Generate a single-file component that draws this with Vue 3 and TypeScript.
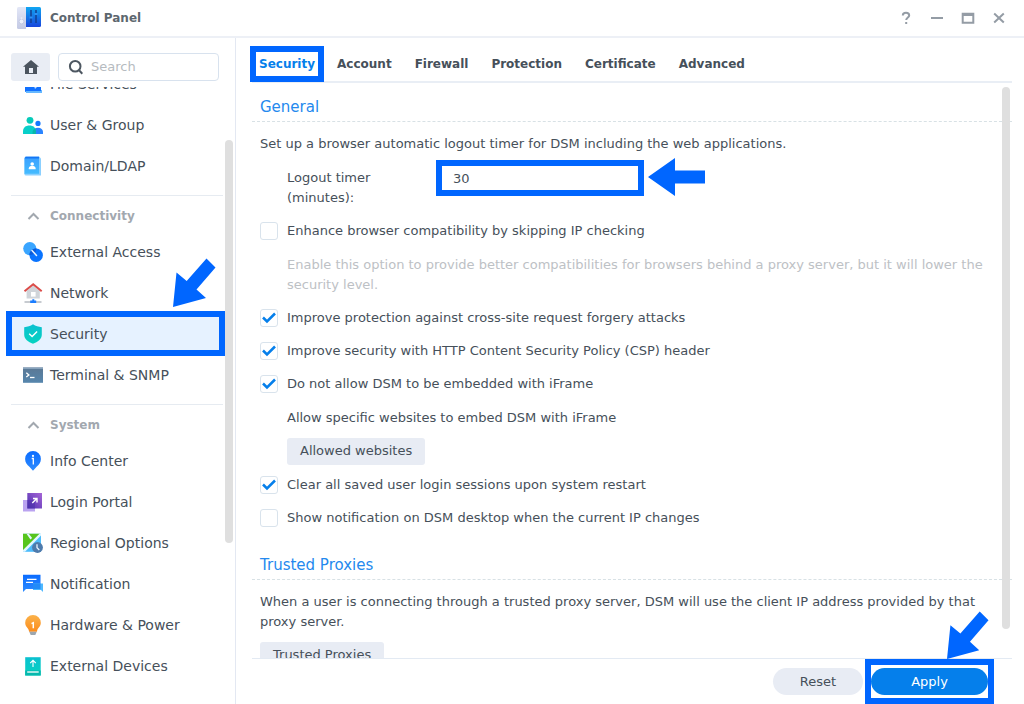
<script setup lang="ts">
import { ref } from 'vue'

interface NavItem { id: string; label: string }
interface NavGroup { title?: string; items: NavItem[] }

const groups: NavGroup[] = [
  {
    items: [
      { id: 'file', label: 'File Services' },
      { id: 'user', label: 'User & Group' },
      { id: 'domain', label: 'Domain/LDAP' },
    ],
  },
  {
    title: 'Connectivity',
    items: [
      { id: 'access', label: 'External Access' },
      { id: 'network', label: 'Network' },
      { id: 'security', label: 'Security' },
      { id: 'terminal', label: 'Terminal & SNMP' },
    ],
  },
  {
    title: 'System',
    items: [
      { id: 'info', label: 'Info Center' },
      { id: 'login', label: 'Login Portal' },
      { id: 'regional', label: 'Regional Options' },
      { id: 'notification', label: 'Notification' },
      { id: 'hardware', label: 'Hardware & Power' },
      { id: 'devices', label: 'External Devices' },
    ],
  },
]

const tabs = ['Security', 'Account', 'Firewall', 'Protection', 'Certificate', 'Advanced']
const activeNav = ref('security')
const activeTab = ref('Security')
const search = ref('')
const timer = ref('30')
const skipIp = ref(false)
const csrf = ref(true)
const csp = ref(true)
const iframe = ref(true)
const clearSessions = ref(true)
const notifyIp = ref(false)
</script>

<template>
  <svg class="sprite" aria-hidden="true">
    <defs>
      <linearGradient id="g-blue" x1="0" y1="0" x2="0" y2="1"><stop offset="0" stop-color="#0a6cff" /><stop offset="1" stop-color="#2f8cff" /></linearGradient>
      <linearGradient id="g-sky" x1="0" y1="0" x2="0" y2="1"><stop offset="0" stop-color="#3a9fff" /><stop offset="1" stop-color="#45bdff" /></linearGradient>
      <linearGradient id="g-teal" x1="0" y1="0" x2="0" y2="1"><stop offset="0" stop-color="#0bc0d0" /><stop offset="1" stop-color="#06d3c0" /></linearGradient>
      <linearGradient id="g-purple" x1="1" y1="0" x2="0" y2="1"><stop offset="0" stop-color="#a765d6" /><stop offset="1" stop-color="#4a2fb0" /></linearGradient>
      <linearGradient id="g-orange" x1="0" y1="0" x2="0" y2="1"><stop offset="0" stop-color="#fbb24a" /><stop offset="1" stop-color="#fb8c1c" /></linearGradient>
      <linearGradient id="g-slate" x1="0" y1="0" x2="0" y2="1"><stop offset="0" stop-color="#5b7894" /><stop offset="1" stop-color="#5686ad" /></linearGradient>
      <linearGradient id="g-panel" x1="0" y1="0" x2="0" y2="1"><stop offset="0" stop-color="#10a6f2" /><stop offset="1" stop-color="#1846dc" /></linearGradient>
      <linearGradient id="g-pale" x1="0" y1="0" x2="0" y2="1"><stop offset="0" stop-color="#e3e7f7" /><stop offset="1" stop-color="#c3c9e4" /></linearGradient>
    </defs>
    <symbol id="i-file" viewBox="0 0 20 20">
      <path d="M2 4h6l2 2h7v12H2z" fill="url(#g-blue)" />
      <path d="M3 16h16v3H3z" fill="#66b8ff" />
      <path d="M2 13h16v4H2z" fill="#1271ff" />
      <path d="M11 12l4 0-3 3z" fill="#bfe0ff" />
    </symbol>
    <symbol id="i-user" viewBox="0 0 20 20">
      <circle cx="15" cy="8.4" r="2.6" fill="#1478ff" />
      <path d="M10 19v-2c0-2.600 2-4.300 5-4.300s5 1.700 5 4.300v2z" fill="#2a84ff" />
      <circle cx="7" cy="5.300" r="3.400" fill="#06cbb9" />
      <path d="M0 19v-2.400C0 12.700 2.600 10.600 6.500 10.600S12.800 12.700 12.800 16.600V19z" fill="#08cfc9" />
      <path d="M9.500 19v-1.500c0-2 1.200-3.500 2.800-4.200.4.900.6 2 .6 3.300V19z" fill="#09b7a9" />
    </symbol>
    <symbol id="i-domain" viewBox="0 0 20 20">
      <path d="M3 .800h13.500l1.500 2V19.500H3A1.500 1.500 0 0 1 1.500 18V2.300A1.500 1.500 0 0 1 3 .8z" fill="#8bd0ff" />
      <path d="M2.500.8h13.500v17H3c-1 0-1.500.5-1.500.8V2z" fill="url(#g-sky)" />
      <path d="M2.500.8h13.500v1.600h-14z" fill="#1476f5" />
      <circle cx="9.200" cy="8" r="1.800" fill="#fff" />
      <path d="M5.800 13.300v-1c0-1.700 1.400-2.300 3.400-2.300s3.400.6 3.400 2.300v1z" fill="#fff" />
    </symbol>
    <symbol id="i-access" viewBox="0 0 20 20">
      <circle cx="6.800" cy="6.600" r="6.600" fill="#3aa5ff" />
      <circle cx="13.200" cy="13.200" r="6.700" fill="#0873ff" />
      <path d="M6.500 13c0-3.800 3-6.400 6.900-6.400 0 4-3 6.600-6.900 6.400z" fill="#0a5ad9" />
      <path d="M9 8.500l4.500 5" stroke="#e8f4ff" stroke-width="1.500" stroke-linecap="round" />
    </symbol>
    <symbol id="i-network" viewBox="0 0 20 20">
      <path d="M10.200 2.500l6.600 5.500v7.500H3.600V8z" fill="#d0d4d9" />
      <path d="M1.500 8.300l8.700-7 8.500 7" fill="none" stroke="#db4c49" stroke-width="2" />
      <path d="M8 9h4.600v4.600H8z" fill="#fff" />
      <path d="M1.500 18h17v2h-17z" fill="#c7cbd0" />
      <path d="M9.300 16.300h2v1.200h1.900v2.500H7.200v-2.500h2.100z" fill="#1a7dff" />
    </symbol>
    <symbol id="i-security" viewBox="0 0 20 20">
      <path d="M10 .3c2.600 1.900 5.400 2.600 8.800 2.900v7.600c0 4.200-4 7.300-8.800 9-4.800-1.700-8.800-4.800-8.800-9V3.200C4.600 2.900 7.400 2.200 10 .3z" fill="url(#g-teal)" />
      <path d="M6.200 9.700l2.900 2.800 5-5" fill="none" stroke="#fff" stroke-width="1.400" />
    </symbol>
    <symbol id="i-terminal" viewBox="0 0 20 20">
      <path d="M0 2.500h20v15.300H0z" fill="url(#g-slate)" />
      <path d="M0 2.500h20v1.500H0z" fill="#88a3bc" />
      <path d="M3.300 7.700l2.600 2.200-2.600 2.200" fill="none" stroke="#fff" stroke-width="1.300" />
      <path d="M7 12.500h4.500" stroke="#fff" stroke-width="1.300" />
    </symbol>
    <symbol id="i-info" viewBox="0 0 20 20">
      <path d="M10 0a7.900 7.900 0 0 1 7.900 7.900c0 3.800-2 5.500-4.300 7.800L10 19.700l-3.600-4C4.100 13.400 2.100 11.700 2.100 7.900A7.900 7.900 0 0 1 10 0z" fill="url(#g-blue)" />
      <circle cx="10" cy="4.900" r="1.100" fill="#fff" />
      <path d="M8.700 7.500h1.600v6" fill="none" stroke="#fff" stroke-width="1.300" />
    </symbol>
    <symbol id="i-login" viewBox="0 0 20 20">
      <path d="M0 8h12v11.500H0z" fill="#baa3f0" />
      <path d="M4.300 1h14.700v15.500H4.300z" fill="url(#g-purple)" />
      <path d="M4.300 8H12v8.500H4.300z" fill="#4930a8" opacity=".5" />
      <path d="M9.300 11l4-4M10 6.500h4v4" fill="none" stroke="#fff" stroke-width="1.400" />
    </symbol>
    <symbol id="i-regional" viewBox="0 0 20 20">
      <path d="M0 .800h18v18H0z" fill="#4dbcfb" />
      <path d="M0 .800h17L0 18z" fill="#57c51c" />
      <path d="M0 18.800V17L16.500.8H18V2.500L2 18.800zM3.500.8h2.300l3.300 4.300-1.700 1.500z" fill="#e2f6ff" />
      <circle cx="14.500" cy="14.500" r="5.400" fill="#4e7bac" />
      <path d="M14 11.300v3.500l2.300 2.200" fill="none" stroke="#e7f3ff" stroke-width="1.300" />
    </symbol>
    <symbol id="i-notification" viewBox="0 0 20 20">
      <path d="M0 .800h17.500v14.300H3L0 18z" fill="url(#g-blue)" />
      <path d="M10 9.500h10V18l-2-2h-8z" fill="#4eb8ff" />
      <path d="M10 9.500h7.500v5.600H10z" fill="#228bf7" />
      <path d="M4 5.300h9.500M3 8.300h7" stroke="#fff" stroke-width="1.300" />
    </symbol>
    <symbol id="i-hardware" viewBox="0 0 20 20">
      <path d="M10 0a7.800 7.800 0 0 1 7.800 7.800c0 3.500-2.400 4.700-3.500 7.200l-.4 1.700H6.100L5.700 15c-1.100-2.500-3.500-3.700-3.500-7.200A7.800 7.800 0 0 1 10 0z" fill="url(#g-orange)" />
      <path d="M6.300 16.700h7.400L12.300 20H7.700z" fill="#9da6ae" />
      <path d="M8.500 8.700l1.800-1v5.500" fill="none" stroke="#fff" stroke-width="1.500" />
    </symbol>
    <symbol id="i-devices" viewBox="0 0 20 20">
      <path d="M2.200 1.200h15.500v18.300H2.200z" fill="url(#g-teal)" />
      <path d="M2.200 14.500h15.500v5H2.200z" fill="#07b8ad" />
      <path d="M10 11V5M7.200 7.200L10 4.400l2.800 2.800" fill="none" stroke="#fff" stroke-width="1.100" />
      <path d="M4.200 16h11.500" stroke="#fff" stroke-width="1.300" />
    </symbol>
    <symbol id="a-down" viewBox="0 0 43 49">
      <path d="M33.500 0.500l9 9-19 22 9.500 8.500L0 49l3.500-34.500 10.200 8.500z" fill="#06f" />
    </symbol>
    <symbol id="a-left" viewBox="0 0 57 38">
      <path d="M0 19L27 0v12.500h30v13H27V38z" fill="#06f" />
    </symbol>
  </svg>

  <div class="window">
    <header class="titlebar">
      <svg class="logo" viewBox="0 0 24 22" aria-hidden="true">
        <path d="M1.500 0H9v22H1.500Q0 22 0 20.500v-19Q0 0 1.500 0z" fill="url(#g-pale)" />
        <path d="M9 0h13.500Q24 0 24 1.500v17q0 1.500-1.500 1.500H9z" fill="url(#g-panel)" />
        <path d="M4.500 10.500v2" stroke="#f6f8ff" stroke-width="1.500" />
        <circle cx="4.500" cy="14.500" r="2.400" fill="#eef1fc" stroke="#b4bcda" stroke-width=".6" />
        <path d="M14 3v13M19 3v13" stroke="#153f91" stroke-width="1.500" />
        <path d="M12.500 10.500h3M17.500 7h3" stroke="#2f93f5" stroke-width="2" />
      </svg>
      <h1>Control Panel</h1>
      <div class="window-buttons">
        <button type="button" aria-label="Help"><svg viewBox="0 0 12 12"><path d="M2.800 3.500C2.800 1.700 4.200.8 6 .8s3.200 1 3.200 2.600C9.200 5.400 6.200 5.500 6.200 8M6.200 10v2" /></svg></button>
        <button type="button" aria-label="Minimize"><svg viewBox="0 0 12 12"><path d="M0 6h12" /></svg></button>
        <button type="button" aria-label="Maximize"><svg viewBox="0 0 12 12"><path d="M.7 1.700h10.600v9H.7zM.7 3h10.600" /></svg></button>
        <button type="button" aria-label="Close"><svg viewBox="0 0 12 12"><path d="M1.200 1.500l9.600 9M10.800 1.500l-9.600 9" /></svg></button>
      </div>
    </header>

    <div class="body">
      <aside class="sidebar">
        <div class="tools">
          <button type="button" class="home" aria-label="Home">
            <svg viewBox="0 0 16 14"><path d="M8 0l8 6.700h-2V14H2V6.700H0z" fill="#4b545e" /><path d="M6 8h4v5H6z" fill="#e9edf4" /></svg>
          </button>
          <div class="search">
            <svg viewBox="0 0 14 14" aria-hidden="true"><circle cx="6.200" cy="6.200" r="5.300" /><path d="M9.800 10l3.500 3.700" /></svg>
            <input v-model="search" type="text" placeholder="Search" aria-label="Search">
          </div>
        </div>
        <nav class="nav" aria-label="Control Panel">
          <div class="nav-list">
            <section v-for="(group, i) in groups" :key="i" class="group">
              <h2 v-if="group.title" class="group-title">
                <svg viewBox="0 0 12 8" aria-hidden="true"><path d="M1 7l5-5 5 5" /></svg>{{ group.title }}
              </h2>
              <a
                v-for="item in group.items" :key="item.id" href="#"
                class="nav-item" :class="{ active: item.id === activeNav }"
                @click.prevent="activeNav = item.id"
              >
                <span class="row">
                  <svg class="icon" aria-hidden="true"><use :href="'#i-' + item.id" /></svg>
                  {{ item.label }}
                </span>
                <svg v-if="item.id === 'security'" class="arrow-nav" aria-hidden="true"><use href="#a-down" /></svg>
              </a>
            </section>
          </div>
          <div class="side-thumb"></div>
        </nav>
      </aside>

      <main class="main">
        <div class="tabs" role="tablist">
          <button
            v-for="tab in tabs" :key="tab" type="button" role="tab" class="tab"
            :class="{ active: tab === activeTab }" :aria-selected="tab === activeTab"
            @click="activeTab = tab"
          >{{ tab }}</button>
        </div>

        <div class="content">
          <h2 class="heading">General</h2>
          <div class="block">
            <p class="line">Set up a browser automatic logout timer for DSM including the web applications.</p>
            <div class="field">
              <label for="timer">Logout timer (minutes):</label>
              <div class="highlight">
                <input id="timer" v-model="timer" type="text">
                <svg class="arrow-input" aria-hidden="true"><use href="#a-left" /></svg>
              </div>
            </div>
            <label class="check"><input v-model="skipIp" type="checkbox"><svg viewBox="0 0 18 18"><path d="M3 8.500l4 4 8-8" /></svg><span>Enhance browser compatibility by skipping IP checking</span></label>
            <p class="line indent hint">Enable this option to provide better compatibilities for browsers behind a proxy server, but it will lower the security level.</p>
            <label class="check"><input v-model="csrf" type="checkbox"><svg viewBox="0 0 18 18"><path d="M3 8.500l4 4 8-8" /></svg><span>Improve protection against cross-site request forgery attacks</span></label>
            <label class="check"><input v-model="csp" type="checkbox"><svg viewBox="0 0 18 18"><path d="M3 8.500l4 4 8-8" /></svg><span>Improve security with HTTP Content Security Policy (CSP) header</span></label>
            <label class="check"><input v-model="iframe" type="checkbox"><svg viewBox="0 0 18 18"><path d="M3 8.500l4 4 8-8" /></svg><span>Do not allow DSM to be embedded with iFrame</span></label>
            <p class="line indent">Allow specific websites to embed DSM with iFrame</p>
            <div class="button-row indent"><button type="button" class="button">Allowed websites</button></div>
            <label class="check"><input v-model="clearSessions" type="checkbox"><svg viewBox="0 0 18 18"><path d="M3 8.500l4 4 8-8" /></svg><span>Clear all saved user login sessions upon system restart</span></label>
            <label class="check"><input v-model="notifyIp" type="checkbox"><svg viewBox="0 0 18 18"><path d="M3 8.500l4 4 8-8" /></svg><span>Show notification on DSM desktop when the current IP changes</span></label>
          </div>
          <h2 class="heading">Trusted Proxies</h2>
          <div class="block">
            <p class="line">When a user is connecting through a trusted proxy server, DSM will use the client IP address provided by that proxy server.</p>
            <div class="button-row"><button type="button" class="button">Trusted Proxies</button></div>
          </div>
          <div class="main-thumb"></div>
        </div>

        <footer class="footer">
          <button type="button" class="pill">Reset</button>
          <div class="apply-box">
            <button type="button" class="pill primary">Apply</button>
            <svg class="arrow-apply" aria-hidden="true"><use href="#a-down" /></svg>
          </div>
        </footer>
      </main>
    </div>
  </div>
</template>

<style>
html, body { overflow: hidden; }
</style>

<style scoped>
.sprite { position: absolute; width: 0; height: 0; }
.window {
  display: flex;
  flex-direction: column;
  height: 100vh;
  background: #fff;
  color: #46505a;
  font: 13px/20px "DejaVu Sans", Verdana, sans-serif;
}
.window * { box-sizing: border-box; }
h1, h2, p { margin: 0; }
button, input { font: inherit; color: inherit; }
button { border: 0; padding: 0; background: none; cursor: pointer; }

.titlebar {
  display: flex;
  align-items: center;
  flex: none;
  height: 38px;
  padding: 0 19px 0 17px;
  border-bottom: 2px solid #edf0f6;
}
.logo { width: 24px; height: 22px; }
h1 { flex: 1; margin-left: 9px; font-size: 12px; line-height: 20px; color: #5d676f; }
.window-buttons { display: flex; gap: 19px; }
.window-buttons button { display: flex; }
.window-buttons svg { width: 12px; height: 12px; fill: none; stroke: #949ca5; stroke-width: 2; overflow: visible; }

.body { display: flex; flex: 1; min-height: 0; }
.sidebar {
  display: flex;
  flex-direction: column;
  flex: none;
  width: 236px;
  border-right: 1px solid #e3e8f2;
}
.tools { display: flex; gap: 8px; padding: 15px 16px 6px 11px; }
.home { display: grid; place-items: center; width: 39px; height: 28px; border-radius: 3px; background: #e9edf4; }
.home svg { width: 16px; height: 14px; }
.search {
  display: flex;
  align-items: center;
  flex: 1;
  gap: 8px;
  height: 28px;
  padding: 0 10px;
  border: 1px solid #d8e2ee;
  border-radius: 4px;
}
.search svg { flex: none; width: 14px; height: 14px; fill: none; stroke: #4d5761; stroke-width: 2; overflow: visible; }
.search input { width: 100%; min-width: 0; padding: 0; border: 0; outline: 0; background: none; }
.search input::placeholder { color: #b6bbc0; opacity: 1; }

.nav { position: relative; flex: 1; min-height: 0; overflow: hidden; }
.nav-list { margin: -24px 12px 0 11px; }
.group + .group { margin-top: 9px; border-top: 1px solid #e6ebf1; }
.group-title {
  display: flex;
  align-items: center;
  gap: 10px;
  height: 35px;
  padding: 5px 0 0 16px;
  font-size: 12px;
  color: #a2a8af;
}
.group-title svg { width: 13px; height: 8px; fill: none; stroke: #a2a8af; stroke-width: 2; }
.nav-item {
  position: relative;
  display: flex;
  align-items: center;
  height: 41px;
  color: inherit;
  font-size: 14px;
  text-decoration: none;
}
.row { display: flex; align-items: center; flex: 1; gap: 7px; height: 100%; padding-left: 12px; }
.icon { width: 20px; height: 20px; }
.nav-item.active .row {
  height: 45px;
  margin: 0 -2px 0 -5px;
  padding-left: 11px;
  border: 6px solid #06f;
  background: #e6f2ff;
}
.arrow-nav { position: absolute; right: 7px; bottom: calc(100% + 6px); width: 43px; height: 49px; }
.side-thumb { position: absolute; top: 53px; right: 2px; width: 8px; height: 403px; border-radius: 4px; background: #dfdfdf; }
.nav-item.active { z-index: 1; }

.main { display: flex; flex-direction: column; flex: 1; min-width: 0; padding: 0 12px 0 16px; }
.tabs { display: flex; flex: none; align-items: center; height: 45px; gap: 23px; padding: 8px 0 0 8px; border-bottom: 2px solid #e9eef5; }
.tab { font-size: 12px; font-weight: bold; white-space: nowrap; }
.tab.active {
  z-index: 1;
  height: 36px;
  margin: 0 -10px;
  padding: 0 3px;
  border: 6px solid #06f;
  background: #fff;
  color: #057feb;
}

.content { position: relative; flex: 1; min-height: 0; overflow: hidden; padding-top: 9px; }
.heading {
  height: 30px;
  padding-left: 8px;
  border-bottom: 1px dashed #d8e1e5;
  font-size: 15px;
  font-weight: normal;
  line-height: 30px;
  color: #2489ee;
}
.block { padding: 4px 22px 16px 8px; }
.line { padding: 8px 0 6px; }
.indent { margin-left: 27px; }
.hint { color: #bdc1c5; }
.field { display: flex; padding: 0 0 0 27px; height: 54px; }
.field label { width: 149px; padding: 8px 40px 6px 0; }
.highlight { position: relative; width: 208px; height: 36px; border: 6px solid #06f; }
.highlight input { display: block; width: 100%; height: 100%; padding: 0 11px; border: 0; outline: 0; background: #fff; }
.arrow-input { position: absolute; top: -8px; left: calc(100% + 10px); width: 57px; height: 38px; }
.check { display: grid; grid-template-columns: 19px 1fr; column-gap: 8px; align-items: center; height: 33px; }
.check input {
  grid-area: 1 / 1;
  width: 18px;
  height: 18px;
  margin: 0;
  appearance: none;
  border: 1px solid #d9e3ec;
  border-radius: 3px;
  background: #fff;
}
.check svg { grid-area: 1 / 1; width: 18px; height: 18px; fill: none; stroke: #057feb; stroke-width: 2.5; visibility: hidden; pointer-events: none; }
.check input:checked + svg { visibility: visible; }
.button-row { display: flex; align-items: center; height: 34px; }
.button { height: 27px; padding: 0 13px; border-radius: 3px; background: #e8ecf4; }
.main-thumb { position: absolute; top: 4px; right: 2px; width: 8px; height: 542px; border-radius: 4px; background: #dfdfdf; }

.footer {
  display: flex;
  flex: none;
  justify-content: flex-end;
  align-items: center;
  height: 46px;
  gap: 2px;
  padding-right: 18px;
  border-top: 1px solid #e3eaf3;
}
.pill { width: 90px; height: 27px; border-radius: 14px; background: #e8ecf4; }
.apply-box { position: relative; display: grid; place-items: center; height: 45px; border: 6px solid #06f; }
.pill.primary { width: 117px; background: #057feb; color: #fff; }
.arrow-apply { position: absolute; right: -1px; bottom: calc(100% + 6px); width: 42px; height: 48px; }
</style>
